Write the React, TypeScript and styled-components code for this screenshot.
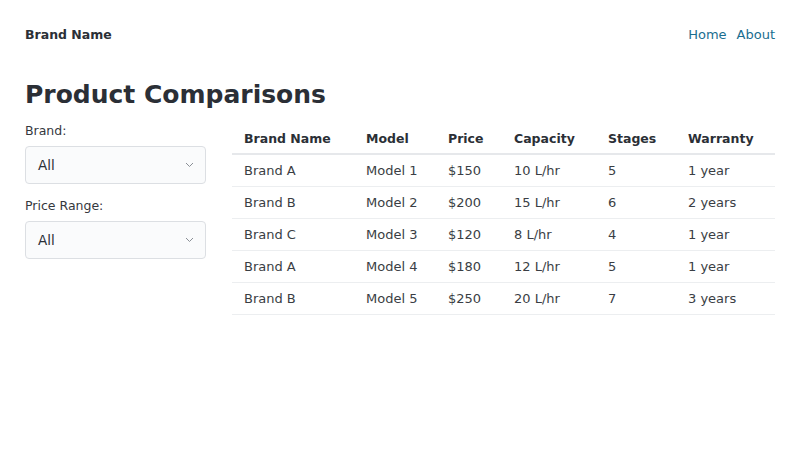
import React, { JSX } from 'react'
import styled, { createGlobalStyle } from 'styled-components'

const GlobalStyle = createGlobalStyle`
  body {
    margin: 0;
    background: #fff;
    font-family: "DejaVu Sans", sans-serif;
    color: #2b2f36;
  }
`

const Page = styled.div`
  padding: 0 25px;
`

const Nav = styled.nav`
  height: 68px;
  display: flex;
  align-items: center;
  justify-content: space-between;
`

const Brand = styled.div`
  font-size: 12.5px;
  font-weight: bold;
`

const Links = styled.div`
  display: flex;
  gap: 10px;
`

const NavLink = styled.a`
  color: #1a6e90;
  font-size: 13px;
  text-decoration: none;
`

const Heading = styled.h1`
  margin: 11px 0 12px;
  font-size: 25px;
  line-height: 32px;
  font-weight: bold;
`

const Layout = styled.div`
  display: flex;
  gap: 26px;
  align-items: flex-start;
`

const Sidebar = styled.div`
  width: 181px;
  display: flex;
  flex-direction: column;
`

const Label = styled.label`
  font-size: 12.5px;
  line-height: 16px;
  margin: 0 0 7px;
  color: #34383e;
`

const SelectBox = styled.div<{ $last?: boolean }>`
  height: 38px;
  box-sizing: border-box;
  border: 1px solid #dcdfe3;
  border-radius: 4px;
  background: #fafbfc;
  display: flex;
  align-items: center;
  justify-content: space-between;
  padding: 0 11px 0 12px;
  font-size: 13.5px;
  color: #2b2f36;
  margin-bottom: ${(p) => (p.$last ? '0' : '14px')};
`

const Table = styled.table`
  flex: 1;
  border-collapse: collapse;
  table-layout: fixed;
  font-size: 13px;
`

const Th = styled.th<{ $w: number }>`
  box-sizing: border-box;
  width: ${(p) => p.$w}px;
  text-align: left;
  font-weight: bold;
  font-size: 12.5px;
  padding: 0 12px;
  height: 31px;
  border-bottom: 2px solid #e6e8eb;
  white-space: nowrap;
`

const Td = styled.td`
  padding: 0 12px;
  height: 31px;
  border-bottom: 1px solid #eceef0;
  color: #3a3e44;
  white-space: nowrap;
`

const Chevron = (): JSX.Element => (
  <svg width="9" height="6" viewBox="0 0 9 6" fill="none">
    <path d="M1 1l3.5 3.5L8 1" stroke="#8a8f96" strokeWidth="1" />
  </svg>
)

const columns: Array<[string, number]> = [
  ['Brand Name', 122],
  ['Model', 82],
  ['Price', 66],
  ['Capacity', 94],
  ['Stages', 80],
  ['Warranty', 99]
]

const rows = [
  ['Brand A', 'Model 1', '$150', '10 L/hr', '5', '1 year'],
  ['Brand B', 'Model 2', '$200', '15 L/hr', '6', '2 years'],
  ['Brand C', 'Model 3', '$120', '8 L/hr', '4', '1 year'],
  ['Brand A', 'Model 4', '$180', '12 L/hr', '5', '1 year'],
  ['Brand B', 'Model 5', '$250', '20 L/hr', '7', '3 years']
]

const App = (): JSX.Element => {
  return (
    <Page>
      <GlobalStyle />
      <Nav>
        <Brand>Brand Name</Brand>
        <Links>
          <NavLink href="#">Home</NavLink>
          <NavLink href="#">About</NavLink>
        </Links>
      </Nav>
      <Heading>Product Comparisons</Heading>
      <Layout>
        <Sidebar>
          <Label>Brand:</Label>
          <SelectBox>
            <span>All</span>
            <Chevron />
          </SelectBox>
          <Label>Price Range:</Label>
          <SelectBox $last>
            <span>All</span>
            <Chevron />
          </SelectBox>
        </Sidebar>
        <Table>
          <thead>
            <tr>
              {columns.map(([name, w]) => (
                <Th key={name} $w={w}>{name}</Th>
              ))}
            </tr>
          </thead>
          <tbody>
            {rows.map((r, i) => (
              <tr key={i}>
                {r.map((c, j) => (
                  <Td key={j}>{c}</Td>
                ))}
              </tr>
            ))}
          </tbody>
        </Table>
      </Layout>
    </Page>
  )
}

export default App
